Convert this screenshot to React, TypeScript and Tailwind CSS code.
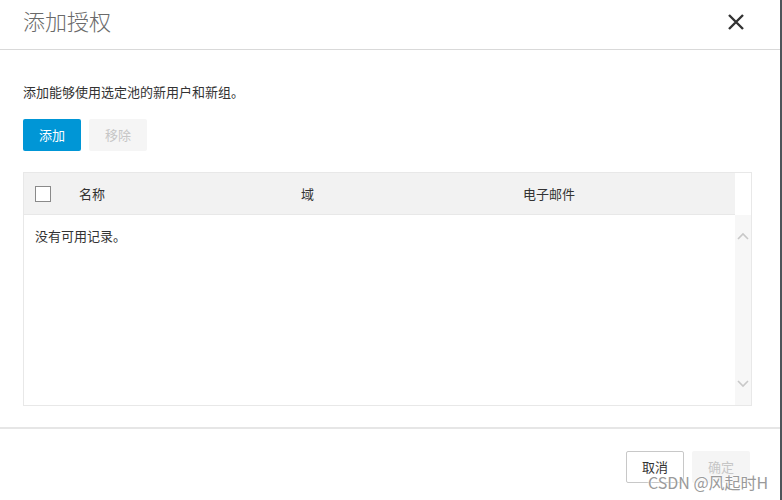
import React from "react";

const font = { fontFamily: '"Noto Sans CJK SC", "Noto Sans", "Liberation Sans", sans-serif' };

function Chevron({ up }: { up?: boolean }) {
  return (
    <svg width="12" height="8" viewBox="0 0 12 8" fill="none">
      <path
        d={up ? "M1 7 L6 2 L11 7" : "M1 1 L6 6 L11 1"}
        stroke="#c8c8c8"
        strokeWidth="1.6"
      />
    </svg>
  );
}

export default function App() {
  return (
    <div
      className="relative w-[782px] h-[500px] overflow-hidden bg-white border-r-2 border-[#4e545a] flex flex-col text-[#333]"
      style={font}
    >
      {/* Header */}
      <div className="h-[50px] shrink-0 border-b border-[#d9d9d9] flex items-start justify-between pl-[23px] pr-[35px] pt-[6px]">
        <div className="text-[22px] leading-[28px] text-[#6a6a6a] font-light">添加授权</div>
        <svg width="18" height="18" viewBox="0 0 18 18" className="mt-[7px]">
          <path d="M2 2 L16 16 M16 2 L2 16" stroke="#333" strokeWidth="2.4" strokeLinecap="butt" />
        </svg>
      </div>

      {/* Body */}
      <div className="px-[23px] pt-[33px] flex flex-col">
        <div className="text-[13px] leading-[18px] text-[#333]">添加能够使用选定池的新用户和新组。</div>
        <div className="mt-[18px] flex gap-[8px]">
          <button className="w-[58px] h-[32px] rounded-[2px] bg-[#0096d6] text-white text-[13px]">添加</button>
          <button className="w-[58px] h-[32px] rounded-[2px] bg-[#f5f5f5] text-[#c6c6c6] text-[13px]">移除</button>
        </div>

        {/* Table */}
        <div className="mt-[21px] w-[729px] h-[234px] border border-[#e8e8e8] flex">
          <div className="flex-1 flex flex-col">
            <div className="h-[42px] bg-[#f2f2f2] border-b border-[#e8e8e8] flex items-center text-[13px] text-[#333]">
              <div className="w-[55px] pl-[11px] flex items-center">
                <div className="w-[16px] h-[16px] border border-[#8a8a8a] bg-white" />
              </div>
              <div className="w-[222px]">名称</div>
              <div className="w-[222px]">域</div>
              <div className="w-[212px]">电子邮件</div>
            </div>
            <div className="pl-[11px] pt-[12px] text-[13px] leading-[18px] text-[#333]">没有可用记录。</div>
          </div>
          <div className="w-[17px] flex flex-col">
            <div className="h-[42px] bg-white" />
            <div className="flex-1 bg-[#f7f7f7] flex flex-col items-center justify-between pt-[17px] pb-[17px]">
              <Chevron up />
              <Chevron />
            </div>
          </div>
        </div>
      </div>

      {/* Footer */}
      <div className="mt-[21px] h-[2px] bg-[#e6e6e6]" />
      <div className="flex justify-end gap-[8px] pr-[30px] pt-[22px]">
        <button className="w-[58px] h-[32px] rounded-[2px] border border-[#c8c8c8] bg-white text-[#333] text-[13px]">取消</button>
        <button className="w-[58px] h-[32px] rounded-[2px] bg-[#f5f5f5] text-[#c6c6c6] text-[13px]">确定</button>
      </div>

      {/* Watermark */}
      <div
        className="absolute left-[648px] top-[472px] text-[16px] leading-[20px] text-[#9a9a9a]"
        style={{ textShadow: "0 0 2px #fff, 0 0 2px #fff" }}
      >
        CSDN @风起时H
      </div>
    </div>
  );
}
